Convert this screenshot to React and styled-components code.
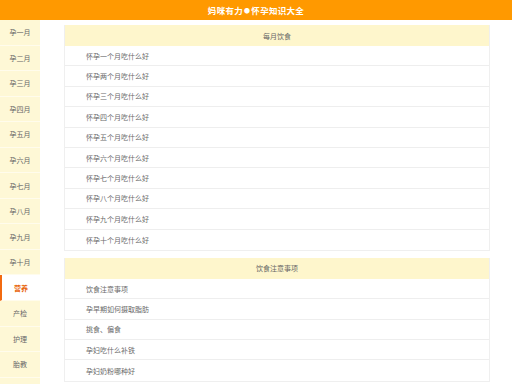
import React from "react";
import styled, { createGlobalStyle } from "styled-components";

const Global = createGlobalStyle`
  html, body { margin: 0; padding: 0; background: #fff; }
  body { font-family: "Noto Sans CJK SC", "Noto Sans", sans-serif; }
`;

const Page = styled.div`
  width: 512px;
  height: 384px;
  overflow: hidden;
  display: flex;
  flex-direction: column;
`;

const Header = styled.div`
  height: 20px;
  flex: none;
  background: #ff9900;
  color: #fff;
  font-size: 8.5px;
  font-weight: bold;
  display: flex;
  align-items: center;
  justify-content: center;
  letter-spacing: 0.3px;
`;

const Dot = styled.span`
  font-size: 6px;
  margin: 0 1px;
`;

const Body = styled.div`
  flex: 1;
  display: flex;
  min-height: 0;
`;

const Sidebar = styled.div`
  width: 40px;
  flex: none;
  background: #fef8d6;
  display: flex;
  flex-direction: column;
`;

const NavItem = styled.div`
  height: 25.55px;
  flex: none;
  box-sizing: border-box;
  border-bottom: 1px solid #fffcec;
  display: flex;
  align-items: center;
  justify-content: center;
  font-size: 7px;
  color: ${(p) => (p.$active ? "#e8650c" : "#666")};
  font-weight: ${(p) => (p.$active ? "bold" : "normal")};
  background: ${(p) => (p.$active ? "#fff" : "transparent")};
  border-left: ${(p) => (p.$active ? "2px solid #f26a10" : "none")};
`;

const Main = styled.div`
  flex: 1;
  padding: 5px 22px 0 24px;
  display: flex;
  flex-direction: column;
  gap: 7px;
`;

const Section = styled.div`
  border: 1px solid #efefef;
  border-top: none;
  background: #fff;
`;

const SectionTitle = styled.div`
  height: 21px;
  background: #fef6cc;
  display: flex;
  align-items: center;
  justify-content: center;
  font-size: 7px;
  color: #666;
`;

const Row = styled.div`
  height: 20.4px;
  box-sizing: border-box;
  border-bottom: 1px solid #eeeeee;
  display: flex;
  align-items: center;
  padding-left: 21px;
  font-size: 7px;
  color: #6a6a6a;
  &:last-child { border-bottom: none; }
`;

const months = ["一", "二", "三", "四", "五", "六", "七", "八", "九", "十"];
const monthsAlt = ["一", "两", "三", "四", "五", "六", "七", "八", "九", "十"];

const nav = [
  ...months.map((m) => "孕" + m + "月"),
  "营养",
  "产检",
  "护理",
  "胎教",
];

const sections = [
  {
    title: "每月饮食",
    rows: monthsAlt.map((m) => "怀孕" + m + "个月吃什么好"),
  },
  {
    title: "饮食注意事项",
    rows: ["饮食注意事项", "孕早期如何摄取脂肪", "挑食、偏食", "孕妇吃什么补铁", "孕妇奶粉哪种好"],
  },
];

export default function App() {
  return (
    <Page>
      <Global />
      <Header>
        妈咪有力<Dot>●</Dot>怀孕知识大全
      </Header>
      <Body>
        <Sidebar>
          {nav.map((n) => (
            <NavItem key={n} $active={n === "营养"}>
              {n}
            </NavItem>
          ))}
        </Sidebar>
        <Main>
          {sections.map((s) => (
            <Section key={s.title}>
              <SectionTitle>{s.title}</SectionTitle>
              {s.rows.map((r) => (
                <Row key={r}>{r}</Row>
              ))}
            </Section>
          ))}
        </Main>
      </Body>
    </Page>
  );
}
